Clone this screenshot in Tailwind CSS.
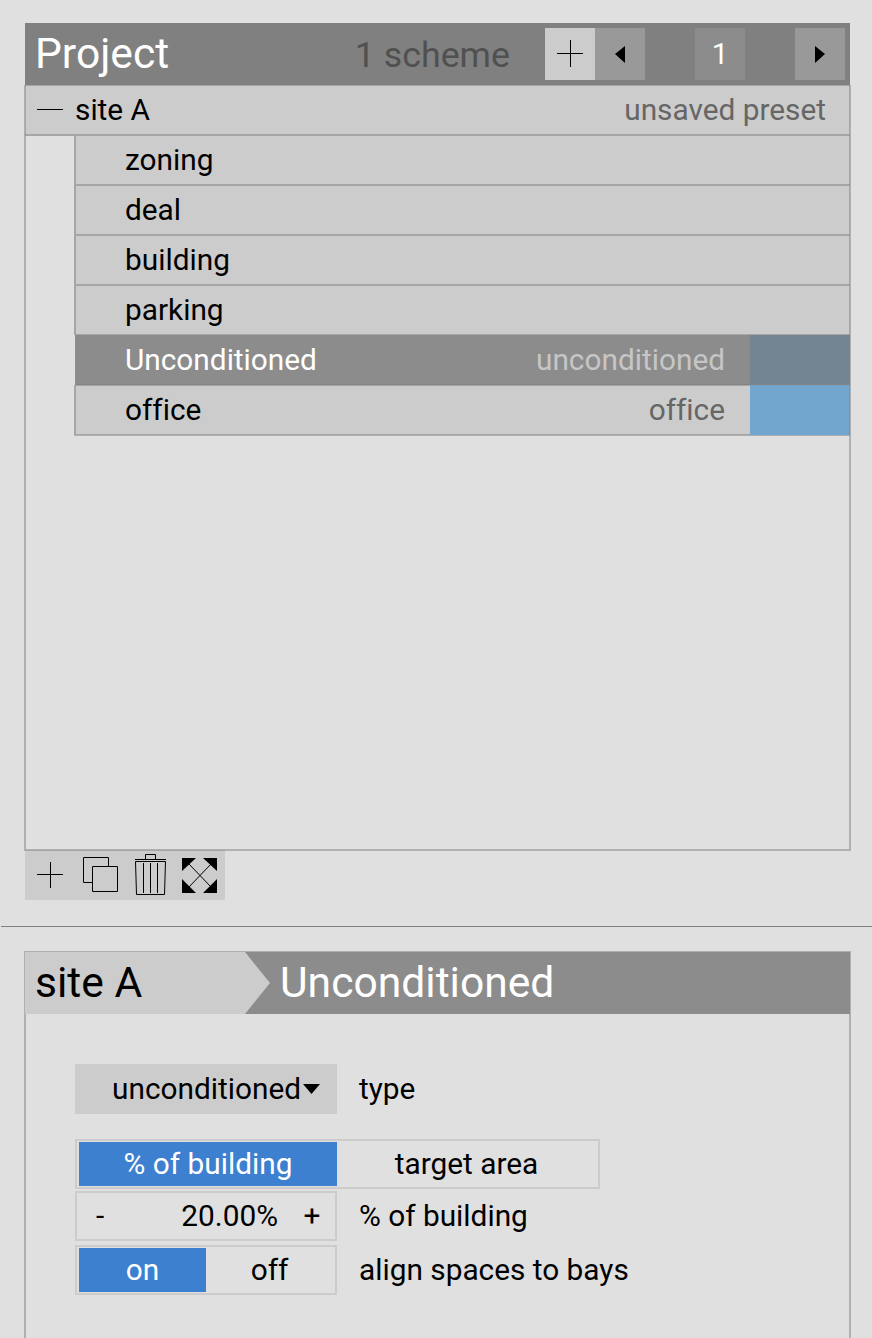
<!DOCTYPE html>
<html lang="en">
<head>
    <meta charset="UTF-8">
    <title>Project</title>
    <script src="https://cdn.jsdelivr.net/npm/@tailwindcss/browser@4"></script>
</head>
<body class="bg-[#e0e0e0] font-[Roboto,sans-serif] text-[29.8px] leading-[50px] [font-variant-ligatures:none] text-black w-[872px] h-[1338px] overflow-hidden">

    <!-- Project panel -->
    <section class="pt-[23px] px-[25px] w-[875px] h-[926px]">
        <header class="w-[825px] h-[62px] bg-[#808080] flex items-center pl-[10px] pr-[5px]">
            <h1 class="-mt-[2px] text-[42.6px] text-white">Project</h1>
            <span class="ml-auto mr-[35px] mt-[2px] text-[35.8px] text-[#505050]">1 scheme</span>
            <button class="w-[50px] h-[52px] bg-[#cccccc]">
                <svg class="w-[50px] h-[52px]" viewBox="0 0 50 52" fill="none" stroke="#000">
                    <path d="M12 25.5H38M25.5 12V39" />
                </svg>
            </button>
            <button class="w-[50px] h-[52px] bg-[#999999]">
                <svg class="w-[50px] h-[52px]" viewBox="0 0 50 52">
                    <path d="M20 26L30 18V35Z" />
                </svg>
            </button>
            <span class="mx-[50px] w-[50px] h-[52px] leading-[52px] bg-[#8c8c8c] text-white text-center">1</span>
            <button class="w-[50px] h-[52px] bg-[#999999]">
                <svg class="w-[50px] h-[52px]" viewBox="0 0 50 52">
                    <path d="M30 26L20 18V35Z" />
                </svg>
            </button>
        </header>

        <!-- Tree -->
        <div class="relative w-[825px] h-[765px]">
            <div class="flex items-center h-[51px] -mb-px bg-[#cccccc] border-t border-b-2 border-[#a6a6a6] pl-[12px] pr-[24px]">
                <svg class="w-[26px] h-[2px]" viewBox="0 0 26 2" stroke="#000">
                    <path d="M0 0.5H26" />
                </svg>
                <span class="ml-[12px]">site A</span>
                <span class="ml-auto text-[#666666]">unsaved preset</span>
            </div>
            <ul class="ml-[49px] border-b border-[#b0b0b0]">
                <li class="h-[50px] pl-[49px] leading-[48px] bg-[#cccccc] border-y border-l-2 border-[#a6a6a6]">zoning</li>
                <li class="h-[50px] pl-[49px] leading-[48px] bg-[#cccccc] border-y border-l-2 border-[#a6a6a6]">deal</li>
                <li class="h-[50px] pl-[49px] leading-[48px] bg-[#cccccc] border-y border-l-2 border-[#a6a6a6]">building</li>
                <li class="h-[50px] pl-[49px] leading-[48px] bg-[#cccccc] border-y border-l-2 border-[#a6a6a6]">parking</li>
                <li class="flex h-[50px] ml-px pl-[50px] bg-[#8c8c8c] border-b border-[#848484] text-white">
                    <span>Unconditioned</span>
                    <span class="ml-auto mr-[25px] text-[#c6c6c6]">unconditioned</span>
                    <span class="w-[100px] bg-[#738592]"></span>
                </li>
                <li class="flex h-[50px] pl-[49px] leading-[48px] bg-[#cccccc] border-y border-l-2 border-[#a6a6a6]">
                    <span>office</span>
                    <span class="ml-auto mr-[25px] text-[#666666]">office</span>
                    <span class="w-[100px] h-[50px] -mt-px bg-[#73a6cf]"></span>
                </li>
            </ul>
            <!-- Frame drawn over the rows -->
            <div class="absolute -left-px -right-px top-0 -bottom-px border-x-2 border-b-2 border-[#808080]/50 pointer-events-none"></div>
        </div>

        <!-- Toolbar -->
        <div class="flex w-[200px] h-[50px] bg-[#cccccc]">
            <button class="w-[50px] h-[50px]">
                <svg class="w-[50px] h-[50px]" viewBox="0 0 50 50" fill="none" stroke="#000">
                    <path d="M12 24.5H38M25.5 12V38" />
                </svg>
            </button>
            <button class="w-[50px] h-[50px]">
                <svg class="w-[50px] h-[50px]" viewBox="0 0 50 50" fill="none" stroke="#000">
                    <path d="M17.5 32.5H8.5V7.5H33.5V16.5" />
                    <path d="M17.5 16.5H42.5V41.5H17.5Z" />
                </svg>
            </button>
            <button class="w-[50px] h-[50px]">
                <svg class="w-[50px] h-[50px]" viewBox="0 0 50 50" fill="none" stroke="#000">
                    <path d="M10 9.5H41M20.5 9.5V4.5H30.5V9.5M10.5 11.5H40.5L39.5 44.5H11.5Z" />
                    <path d="M18.5 13V43M25.5 13V43M32.5 13V43" />
                </svg>
            </button>
            <button class="w-[50px] h-[50px]">
                <svg class="w-[50px] h-[50px]" viewBox="0 0 50 50">
                    <path d="M7 8H21L7 21ZM42 8V21L28 8ZM7 43V29L21 43ZM42 43H28L42 29Z" />
                    <path d="M13 13L37 38M37 13L13 38" stroke="#000" />
                </svg>
            </button>
        </div>
    </section>

    <hr class="ml-px border-t border-[#808080]">

    <!-- Selected space -->
    <section class="mt-[24px] ml-[24px] w-[827px] h-[387px] border-x-2 border-t border-[#b0b0b0]">
        <header class="-mx-px flex h-[62px] bg-[#8c8c8c] text-[42.6px] leading-[60px]">
            <div class="w-[220px] pl-[10px] bg-[#cccccc]">site A</div>
            <svg class="w-[25px] h-[62px]" viewBox="0 0 25 62" fill="#cccccc">
                <path d="M0 0L25 31L0 62Z" />
            </svg>
            <div class="pl-[10px] text-white">Unconditioned</div>
        </header>

        <div class="pl-[49px] pt-[50px]">
            <div class="flex">
                <button class="flex items-center w-[262px] h-[50px] pl-[37px] bg-[#cccccc]">
                    <span>unconditioned</span>
                    <svg class="ml-[2px] w-[17px] h-[11px]" viewBox="0 0 17 11">
                        <path d="M0 0H17L8.5 10Z" />
                    </svg>
                </button>
                <span class="ml-[22px]">type</span>
            </div>

            <div class="flex mt-[25px] w-[525px] h-[50px] p-[2px] border-2 border-[#cccccc] leading-[44px] text-center">
                <div class="w-[258px] h-[44px] -mt-px bg-[#3d80cf] text-white">% of building</div>
                <div class="flex-1 -mt-px">target area</div>
            </div>

            <div class="flex mt-[2px]">
                <div class="flex w-[262px] h-[50px] border-2 border-[#cccccc] leading-[46px]">
                    <button class="w-[46px] text-center leading-[46px]">-</button>
                    <span class="flex-1 text-right">20.00%</span>
                    <button class="w-[46px] ml-[11px] text-center leading-[46px]">+</button>
                </div>
                <span class="ml-[22px]">% of building</span>
            </div>

            <div class="flex mt-[4px]">
                <div class="flex w-[262px] h-[50px] p-[2px] border-2 border-[#cccccc] leading-[44px] text-center">
                    <div class="w-[127px] h-[44px] -mt-px bg-[#3d80cf] text-white">on</div>
                    <div class="flex-1 -mt-px">off</div>
                </div>
                <span class="ml-[22px]">align spaces to bays</span>
            </div>
        </div>
    </section>
</body>
</html>
